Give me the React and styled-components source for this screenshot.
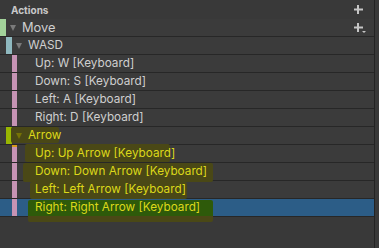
import React from "react";
import styled, { createGlobalStyle } from "styled-components";

const GlobalStyle = createGlobalStyle`
  html, body {
    margin: 0;
    padding: 0;
    background: #393939;
  }
  body {
    font-family: Inter, "Noto Sans", sans-serif;
    -webkit-font-smoothing: antialiased;
  }
`;

const OLIVE = "#4a4816";
const GREEN = "#2e5a0a";

const Panel = styled.div`
  width: 374px;
  height: 248px;
  border-right: 1px solid #232323;
  background: #393939;
`;

const Header = styled.div`
  height: 19px;
  display: flex;
  align-items: center;
  justify-content: space-between;
  padding: 0 7px 0 11px;
  color: #c8c8c8;
  font-size: 10px;
  font-weight: 700;
`;

const Row = styled.div`
  height: 17px;
  display: flex;
  align-items: stretch;
  padding-left: ${(p) => p.$depth * 6}px;
  border-bottom: 1px solid #272727;
  background: ${(p) => (p.$selected ? "#2c5d87" : "#3b3b3b")};
`;

const Bar = styled.div`
  flex: none;
  width: ${(p) => (p.$depth === 2 ? 5 : 6)}px;
  background: ${(p) => p.$color};
`;

const Toggle = styled.div`
  position: relative;
  z-index: 1;
  flex: none;
  width: 0;
  height: 0;
  align-self: center;
  margin: 1px 6px 0 4px;
  border-left: 3.5px solid transparent;
  border-right: 3.5px solid transparent;
  border-top: 6px solid ${(p) => (p.$hl ? "#767206" : "#7a7a7a")};
`;

const Label = styled.span`
  flex: 1;
  display: flex;
  align-items: center;
  justify-content: space-between;
  margin-left: ${(p) => (p.$leaf ? 18 : 0)}px;
  padding-right: 7px;
  line-height: 17px;
  font-size: ${(p) => (p.$depth === 0 ? 12.8 : 11.75)}px;
  color: ${(p) => (p.$hl ? "#dcd81a" : "#cfcfcf")};
  white-space: nowrap;
`;

const Mark = styled.span`
  position: relative;
  z-index: 0;
  display: inline-block;
  &::before {
    content: "";
    position: absolute;
    z-index: -1;
    left: ${(p) => p.$x}px;
    top: ${(p) => p.$y}px;
    width: ${(p) => p.$w}px;
    height: ${(p) => p.$h}px;
    border-radius: 2px;
    background: ${(p) =>
      p.$split
        ? `linear-gradient(to bottom, ${GREEN} ${p.$split}px, ${OLIVE} ${p.$split}px)`
        : OLIVE};
  }
`;

const Plus = ({ drop }) => (
  <svg width="13" height="11" viewBox="0 0 13 11">
    <path d="M4 1v9M0 5.5h9" stroke="#c6c6c6" strokeWidth="2" fill="none" />
    {drop && <path d="M8 9h4l-2 2z" fill="#c6c6c6" />}
  </svg>
);

const rows = [
  { depth: 0, label: "Move", bar: "#a2d29a", group: true, plus: true },
  { depth: 1, label: "WASD", bar: "#8fb9bf", group: true },
  { depth: 2, label: "Up: W [Keyboard]" },
  { depth: 2, label: "Down: S [Keyboard]" },
  { depth: 2, label: "Left: A [Keyboard]" },
  { depth: 2, label: "Right: D [Keyboard]" },
  { depth: 1, label: "Arrow", bar: "#98b602", group: true, mark: { x: -17, y: 0, w: 48, h: 16 } },
  {
    depth: 2,
    label: "Up: Up Arrow [Keyboard]",
    bar: "linear-gradient(to bottom, #d69a1c 2px, #c693b4 2px)",
    mark: { x: -10, y: -1, w: 145, h: 18 },
  },
  { depth: 2, label: "Down: Down Arrow [Keyboard]", mark: { x: -12, y: 0, w: 190, h: 19 } },
  { depth: 2, label: "Left: Left Arrow [Keyboard]", mark: { x: -5, y: 1, w: 157, h: 17 } },
  {
    depth: 2,
    label: "Right: Right Arrow [Keyboard]",
    selected: true,
    mark: { x: -7, y: 1, w: 185, h: 22, split: 16 },
  },
];

export default function App() {
  return (
    <>
      <GlobalStyle />
      <Panel>
        <Header>
          <span>Actions</span>
          <Plus />
        </Header>
        {rows.map((r) => {
          const text = r.mark ? (
            <Mark $x={r.mark.x} $y={r.mark.y} $w={r.mark.w} $h={r.mark.h} $split={r.mark.split}>
              {r.label}
            </Mark>
          ) : (
            <span>{r.label}</span>
          );
          return (
            <Row key={r.label} $depth={r.depth} $selected={r.selected}>
              <Bar $depth={r.depth} $color={r.bar || "#c693b4"} />
              {r.group && <Toggle $hl={!!r.mark} />}
              <Label $leaf={!r.group} $depth={r.depth} $hl={!!r.mark}>
                {text}
                {r.plus && <Plus drop />}
              </Label>
            </Row>
          );
        })}
      </Panel>
    </>
  );
}
